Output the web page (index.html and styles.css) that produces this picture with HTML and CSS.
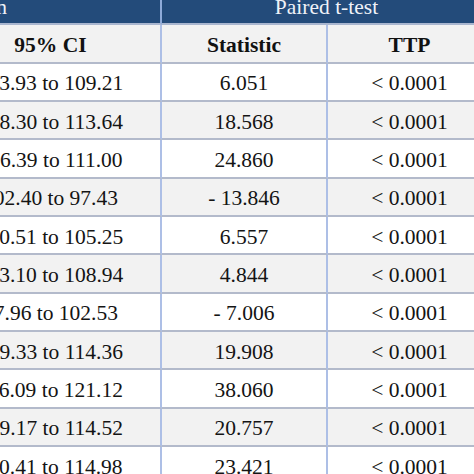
FILE: index.html
```html
<!DOCTYPE html>
<html>
<head>
<meta charset="utf-8">
<link rel="stylesheet" href="styles.css">
</head>
<body>
<div class="table">
  <div class="row head">
    <div class="cell group sep-head">Bland-Altman</div>
    <div class="cell group">Paired t-test</div>
  </div>
  <div class="row sub">
    <div class="cell sep">95% CI</div>
    <div class="cell sep">Statistic</div>
    <div class="cell">TTP</div>
  </div>
  <div class="row"><div class="cell sep">103.93 to 109.21</div><div class="cell sep">6.051</div><div class="cell">&lt; 0.0001</div></div>
  <div class="row alt"><div class="cell sep">108.30 to 113.64</div><div class="cell sep">18.568</div><div class="cell">&lt; 0.0001</div></div>
  <div class="row"><div class="cell sep">106.39 to 111.00</div><div class="cell sep">24.860</div><div class="cell">&lt; 0.0001</div></div>
  <div class="row alt"><div class="cell sep">102.40 to 97.43</div><div class="cell sep">- 13.846</div><div class="cell">&lt; 0.0001</div></div>
  <div class="row"><div class="cell sep">100.51 to 105.25</div><div class="cell sep">6.557</div><div class="cell">&lt; 0.0001</div></div>
  <div class="row alt"><div class="cell sep">103.10 to 108.94</div><div class="cell sep">4.844</div><div class="cell">&lt; 0.0001</div></div>
  <div class="row"><div class="cell sep">97.96 to 102.53</div><div class="cell sep">- 7.006</div><div class="cell">&lt; 0.0001</div></div>
  <div class="row alt"><div class="cell sep">109.33 to 114.36</div><div class="cell sep">19.908</div><div class="cell">&lt; 0.0001</div></div>
  <div class="row"><div class="cell sep">116.09 to 121.12</div><div class="cell sep">38.060</div><div class="cell">&lt; 0.0001</div></div>
  <div class="row alt"><div class="cell sep">109.17 to 114.52</div><div class="cell sep">20.757</div><div class="cell">&lt; 0.0001</div></div>
  <div class="row"><div class="cell sep">110.41 to 114.98</div><div class="cell sep">23.421</div><div class="cell">&lt; 0.0001</div></div>
</div>
</body>
</html>
```
FILE: styles.css
```css
html, body {
  margin: 0;
  padding: 0;
  background: #ffffff;
  overflow: hidden;
}

.table {
  width: 550px;
  margin: -13px 0 0 -59px;
  font-family: "Liberation Serif", "Times New Roman", serif;
  font-size: 21.5px;
  color: #141414;
}

.row {
  display: grid;
  grid-template-columns: 221px 166px 163px;
  height: 38.33px;
  background: #ffffff;
}

.row.alt,
.row.sub {
  background: #f2f2f2;
}

.row.head {
  grid-template-columns: 221px 329px;
  background: #234b7a;
  color: #eef2f8;
}

.cell {
  box-sizing: border-box;
  display: flex;
  align-items: center;
  justify-content: center;
  padding-top: 4px;
  border-bottom: 2px solid #b3bacb;
  white-space: nowrap;
}

.sep {
  border-right: 2px solid #adbfe6;
}

.head .cell {
  border-bottom: 2px solid #a9b6cf;
}

.head .sep-head {
  justify-content: flex-end;
  padding-right: 153px;
  border-right: 2px solid #8eaad8;
}

.sub .cell {
  font-weight: bold;
  color: #111111;
}
```
